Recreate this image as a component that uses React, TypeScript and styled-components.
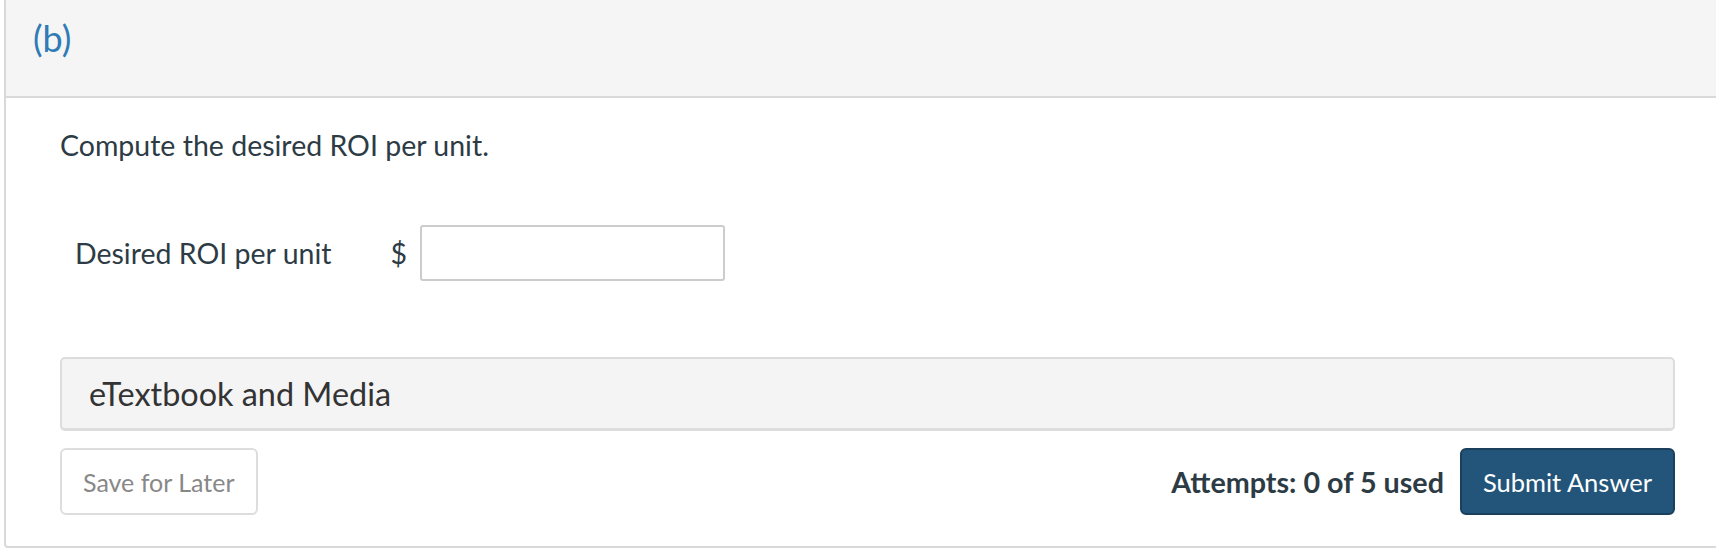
import React from 'react'
import styled, { createGlobalStyle } from 'styled-components'

const GlobalStyle = createGlobalStyle`
  html, body {
    margin: 0;
    padding: 0;
    background: #ffffff;
    overflow: hidden;
  }
  body {
    font-family: Lato, "Open Sans", "Liberation Sans", sans-serif;
    color: #2d3b45;
  }
`

const Panel = styled.section`
  box-sizing: border-box;
  width: 1727px;
  height: 550px;
  margin: -2px 0 0 4px;
  border: 2px solid #d9d9d9;
  border-radius: 4px;
  display: flex;
  flex-direction: column;
`

const Header = styled.header`
  box-sizing: border-box;
  height: 98px;
  padding: 0 0 20px 27px;
  display: flex;
  align-items: center;
  background: #f5f5f5;
  border-bottom: 2px solid #dadada;
`

const PartLabel = styled.h2`
  margin: 0;
  font-size: 36px;
  font-weight: 400;
  color: #2f7bb6;
`

const Body = styled.div`
  flex: 1;
  padding: 26px 54px 0;
  display: flex;
  flex-direction: column;
`

const Prompt = styled.p`
  margin: 0;
  font-size: 28.5px;
  line-height: 42px;
`

const AnswerRow = styled.div`
  display: flex;
  align-items: center;
  margin-top: 59px;
  padding-left: 15px;
  font-size: 28.5px;
`

const FieldLabel = styled.label`
  margin-right: 59px;
`

const Currency = styled.span`
  margin-right: 13px;
`

const AnswerInput = styled.input`
  box-sizing: border-box;
  width: 305px;
  height: 56px;
  border: 2px solid #cccccc;
  border-radius: 3px;
  font: inherit;
  padding: 0 10px;
  outline: none;
`

const MediaBar = styled.div`
  box-sizing: border-box;
  height: 74px;
  margin-top: 76px;
  padding-left: 27px;
  display: flex;
  align-items: center;
  background: #f4f4f4;
  border: 2px solid #dddddd;
  border-bottom-width: 3px;
  border-radius: 5px;
  font-size: 32.4px;
  color: #333333;
`

const Footer = styled.div`
  display: flex;
  justify-content: space-between;
  align-items: center;
  margin-top: 17px;
`

const Actions = styled.div`
  display: flex;
  align-items: center;
  gap: 16px;
`

const Button = styled.button<{ $primary?: boolean }>`
  box-sizing: border-box;
  height: 67px;
  padding: 0 21px;
  font-family: inherit;
  font-size: ${p => (p.$primary ? '25.5px' : '25px')};
  border-radius: 6px;
  cursor: pointer;
  color: ${p => (p.$primary ? '#ffffff' : '#888888')};
  background: ${p => (p.$primary ? '#23557a' : '#ffffff')};
  border: 2px solid ${p => (p.$primary ? '#1a405d' : '#dddddd')};
`

const Attempts = styled.span`
  font-size: 28.7px;
  font-weight: 700;
`

export default function App() {
  return (
    <>
      <GlobalStyle />
      <Panel>
        <Header>
          <PartLabel>(b)</PartLabel>
        </Header>
        <Body>
          <Prompt>Compute the desired ROI per unit.</Prompt>
          <AnswerRow>
            <FieldLabel htmlFor="roi">Desired ROI per unit</FieldLabel>
            <Currency>$</Currency>
            <AnswerInput id="roi" type="text" />
          </AnswerRow>
          <MediaBar>eTextbook and Media</MediaBar>
          <Footer>
            <Button>Save for Later</Button>
            <Actions>
              <Attempts>Attempts: 0 of 5 used</Attempts>
              <Button $primary>Submit Answer</Button>
            </Actions>
          </Footer>
        </Body>
      </Panel>
    </>
  )
}
